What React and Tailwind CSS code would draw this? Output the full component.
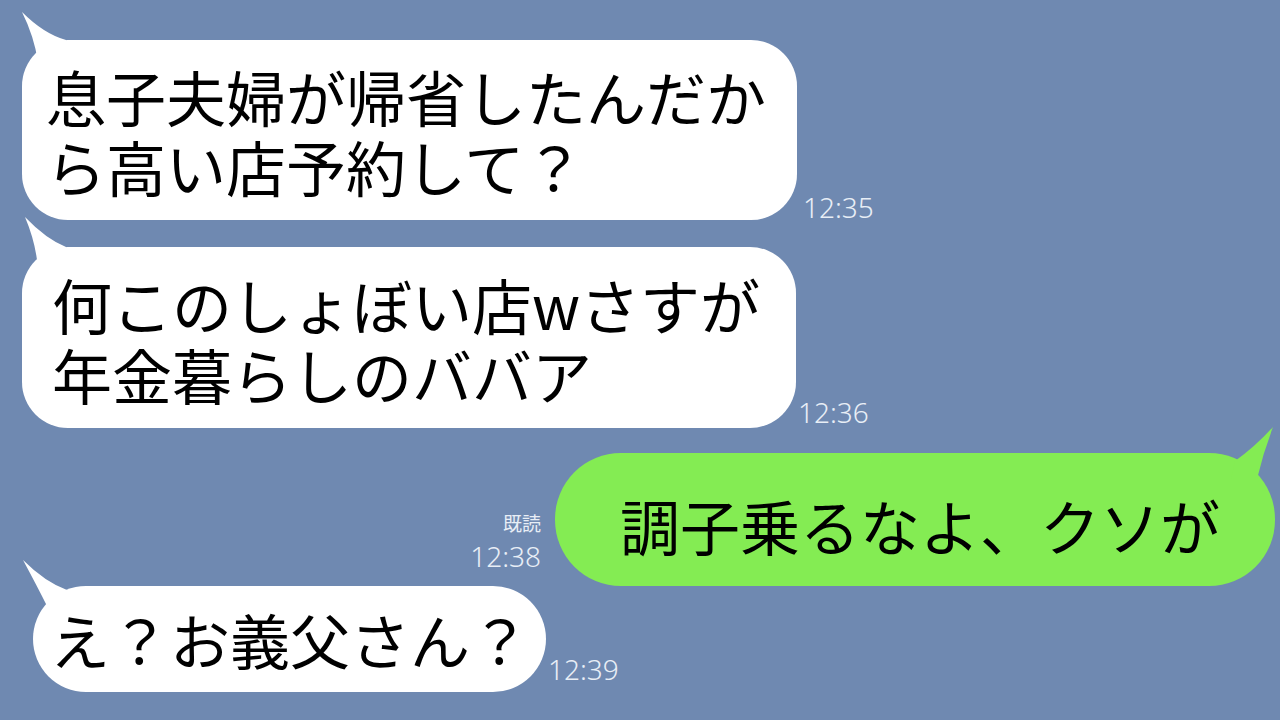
import React from 'react';

const jp = { fontFamily: '"Noto Sans CJK JP", "Noto Sans", sans-serif' };
const time = { fontFamily: '"Noto Sans", "DejaVu Sans", sans-serif' };

// little speech tail drawn over the bubble corner
const Tail = ({ className, d, fill }) => (
  <svg className={`absolute ${className}`} width="64" height="64" viewBox="0 0 64 64">
    <path d={d} fill={fill} />
  </svg>
);

const Stamp = ({ children, className }) => (
  <span style={time} className={`text-[28px] font-light leading-none text-[#e8eef6] ${className}`}>
    {children}
  </span>
);

const App = () => {
  return (
    <div className="w-[1280px] h-[720px] overflow-hidden bg-[#6f89b1] flex flex-col pt-[40px]" style={jp}>
      {/* message 1 */}
      <div className="flex items-end pl-[22px]">
        <div className="relative w-[775px] h-[180px] rounded-[46px] bg-white pl-[24px] pt-[21px] text-[60px] leading-[70px] text-black">
          <Tail className="-left-[2px] -top-[30px]" fill="#fff" d="M2 2 Q14 26 18 52 L52 52 L46 30 Q24 24 2 2Z" />
          <div className="relative whitespace-nowrap">息子夫婦が帰省したんだか</div>
          <div className="relative whitespace-nowrap">ら高い店予約して？</div>
        </div>
        <Stamp className="ml-[6px] -mb-[1px]">12:35</Stamp>
      </div>

      {/* message 2 */}
      <div className="flex items-end pl-[22px] mt-[27px]">
        <div className="relative w-[774px] h-[181px] rounded-[46px] bg-white pl-[30px] pt-[22px] text-[60px] leading-[70px] text-black">
          <Tail className="-left-[2px] -top-[32px]" fill="#fff" d="M5 2 Q16 28 18 54 L52 54 L46 32 Q26 24 5 2Z" />
          <div className="relative whitespace-nowrap">何このしょぼい店wさすが</div>
          <div className="relative whitespace-nowrap">年金暮らしのババア</div>
        </div>
        <Stamp className="ml-[2px] mb-[2px]">12:36</Stamp>
      </div>

      {/* my reply */}
      <div className="flex items-end justify-end pr-[5px] mt-[25px]">
        <div className="flex flex-col items-end mr-[14px] mb-[16px]">
          <span className="text-[19px] leading-none text-[#e8eef6] mb-[10px]">既読</span>
          <Stamp>12:38</Stamp>
        </div>
        <div className="relative w-[720px] h-[133px] rounded-[66px] bg-[#84ec53] flex items-center pl-[65px] pt-[10px] text-[60px] leading-[70px] text-black">
          <Tail className="-right-[6px] -top-[30px]" fill="#84ec53" d="M56 4 Q38 24 18 38 L14 56 L40 56 Q46 30 56 4Z" />
          <span className="relative whitespace-nowrap">調子乗るなよ、クソが</span>
        </div>
      </div>

      {/* message 4 */}
      <div className="flex items-end pl-[33px]">
        <div className="relative w-[513px] h-[106px] rounded-[53px] bg-white flex items-center pl-[17px] text-[60px] leading-[70px] text-black">
          <Tail className="-left-[12px] -top-[30px]" fill="#fff" d="M2 4 Q16 30 26 50 L56 50 L46 34 Q24 26 2 4Z" />
          <span className="relative whitespace-nowrap">え？お義父さん？</span>
        </div>
        <Stamp className="ml-[2px] mb-[9px]">12:39</Stamp>
      </div>
    </div>
  );
};

export default App;
